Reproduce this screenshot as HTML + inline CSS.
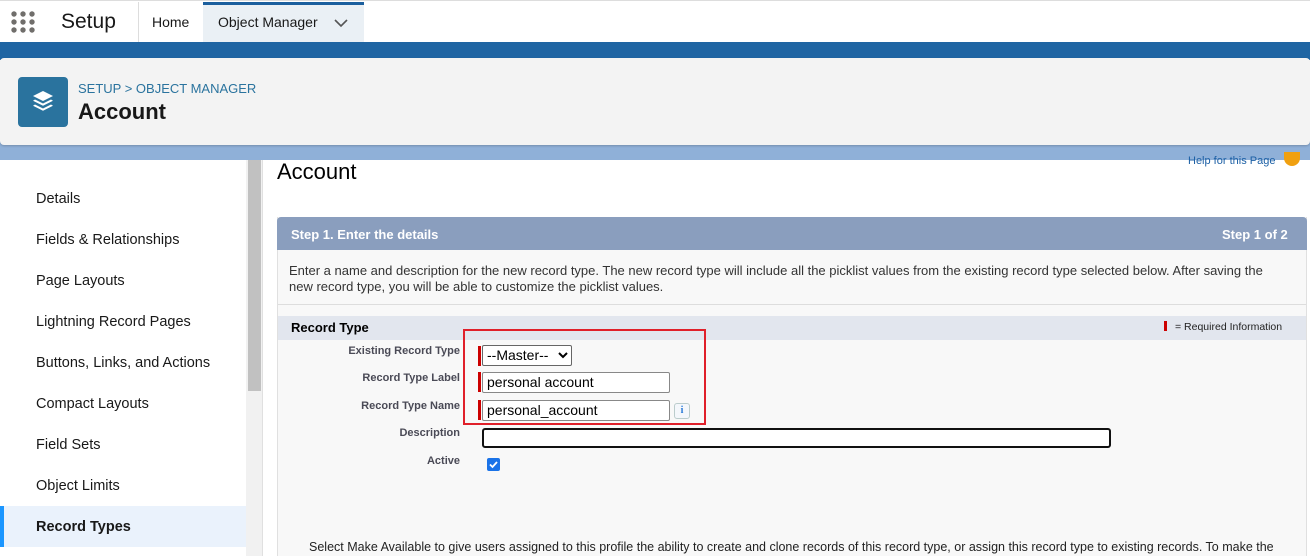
<!DOCTYPE html>
<html><head><style>
*{margin:0;padding:0;box-sizing:border-box}
body{width:1310px;height:556px;overflow:hidden;background:#fff;font-family:"Liberation Sans",Arial,sans-serif;position:relative}
.a{position:absolute}
.nav{font-size:14.5px;color:#181818;left:36px}
.lbl{font-size:11px;font-weight:bold;color:#4a4a56;text-align:right;width:190px;left:270px}
.inp{border:1px solid #888;background:#fff;font-size:14px;padding-left:4px;height:21px;line-height:19px;color:#000;border-radius:2px}
.req{width:3px;height:20px;background:#c00}
</style></head><body>
<div class="a" style="left:0;top:0;width:1310px;height:42px;background:#fff;border-top:1px solid #ddd"></div>
<svg class="a" style="left:11px;top:11px" width="26" height="22">
<g fill="#706e6b"><circle cx="3" cy="3" r="2.7"/><circle cx="12" cy="3" r="2.7"/><circle cx="21" cy="3" r="2.7"/><circle cx="3" cy="11" r="2.7"/><circle cx="12" cy="11" r="2.7"/><circle cx="21" cy="11" r="2.7"/><circle cx="3" cy="19" r="2.7"/><circle cx="12" cy="19" r="2.7"/><circle cx="21" cy="19" r="2.7"/></g></svg>
<div class="a" style="left:61px;top:10px;font-size:21px;color:#181818">Setup</div>
<div class="a" style="left:138px;top:2px;width:1px;height:40px;background:#ddd"></div>
<div class="a" style="left:152px;top:14px;font-size:14px;color:#181818">Home</div>
<div class="a" style="left:203px;top:2px;width:161px;height:40px;background:#eaf0f5;border-top:3px solid #1b5f9e"></div>
<div class="a" style="left:218px;top:14px;font-size:14px;color:#181818">Object Manager</div>
<svg class="a" style="left:334px;top:19px" width="14" height="9"><path d="M1 1l6 6 6-6" stroke="#555" stroke-width="1.6" fill="none"/></svg>
<div class="a" style="left:0;top:42px;width:1310px;height:18px;background:#1f65a3"></div>
<div class="a" style="left:0;top:138px;width:1310px;height:22px;background:#8fb0d8"></div>
<div class="a" style="left:0;top:58px;width:1310px;height:87px;background:#f3f3f3;border-radius:4px;box-shadow:0 1px 2px rgba(0,0,0,.2)"></div>
<div class="a" style="left:18px;top:77px;width:50px;height:50px;background:#2a739e;border-radius:4px"></div>
<svg class="a" style="left:31px;top:89px" width="24" height="24"><g fill="#fff"><path d="M12 2l10 5-10 5-10-5z"/><path d="M4 10.5l8 4 8-4 2 1.2-10 5-10-5z"/><path d="M4 15.5l8 4 8-4 2 1.2-10 5-10-5z"/></g></svg>
<div class="a" style="left:78px;top:81px;font-size:13px;color:#2a739e">SETUP &gt; OBJECT MANAGER</div>
<div class="a" style="left:78px;top:99px;font-size:22px;font-weight:bold;color:#181818">Account</div>
<div class="nav a" style="top:191px">Details</div>
<div class="nav a" style="top:232px">Fields &amp; Relationships</div>
<div class="nav a" style="top:273px">Page Layouts</div>
<div class="nav a" style="top:314px">Lightning Record Pages</div>
<div class="nav a" style="top:355px">Buttons, Links, and Actions</div>
<div class="nav a" style="top:396px">Compact Layouts</div>
<div class="nav a" style="top:437px">Field Sets</div>
<div class="nav a" style="top:478px">Object Limits</div>
<div class="a" style="left:0;top:506px;width:246px;height:41px;background:#eaf2fc;border-left:4px solid #1b96ff"></div>
<div class="nav a" style="top:519px;font-weight:bold">Record Types</div>
<div class="a" style="left:246px;top:160px;width:17px;height:396px;background:#f1f1f1;border-right:1px solid #e0e0e0"></div>
<div class="a" style="left:248px;top:160px;width:13px;height:231px;background:#c1c1c1"></div>
<div class="a" style="left:277px;top:159px;font-size:22px;color:#000">Account</div>
<div class="a" style="left:1188px;top:155px;font-size:11px;color:#1b5fa5">Help for this Page</div>
<div class="a" style="left:1284px;top:152px;width:16px;height:14px;background:#f0a010;border-radius:0 0 8px 8px"></div>
<div class="a" style="left:277px;top:217px;width:1030px;height:339px;background:#f8f8f8;border-left:1px solid #e0e0e0;border-right:1px solid #e0e0e0"></div>
<div class="a" style="left:277px;top:217px;width:1030px;height:33px;background:#8a9ebe;border-radius:4px 4px 0 0"></div>
<div class="a" style="left:291px;top:227px;font-size:13px;font-weight:bold;color:#fff">Step 1. Enter the details</div>
<div class="a" style="left:1222px;top:227px;font-size:13px;font-weight:bold;color:#fff">Step 1 of 2</div>
<div class="a" style="left:289px;top:263px;width:990px;font-size:13px;line-height:16px;color:#333">Enter a name and description for the new record type. The new record type will include all the picklist values from the existing record type selected below. After saving the new record type, you will be able to customize the picklist values.</div>
<div class="a" style="left:278px;top:304px;width:1028px;height:1px;background:#ddd"></div>
<div class="a" style="left:278px;top:316px;width:1028px;height:24px;background:#e2e6ee"></div>
<div class="a" style="left:291px;top:320px;font-size:13px;font-weight:bold;color:#000">Record Type</div>
<div class="a" style="left:1164px;top:321px;width:3px;height:10px;background:#c00"></div>
<div class="a" style="left:1175px;top:321px;font-size:10.5px;color:#222">= Required Information</div>
<div class="lbl a" style="top:345px">Existing Record Type</div>
<div class="lbl a" style="top:372px">Record Type Label</div>
<div class="lbl a" style="top:400px">Record Type Name</div>
<div class="lbl a" style="top:427px">Description</div>
<div class="lbl a" style="top:455px">Active</div>
<div class="req a" style="left:478px;top:346px"></div>
<div class="a inp" style="left:482px;top:345px;width:90px;border-color:#666">--Master--</div>
<svg class="a" style="left:558px;top:352px" width="10" height="7"><path d="M1 1l4 4 4-4" stroke="#000" stroke-width="2" fill="none"/></svg>
<div class="req a" style="left:478px;top:372px"></div>
<div class="a inp" style="left:482px;top:372px;width:188px">personal account</div>
<div class="req a" style="left:478px;top:400px"></div>
<div class="a inp" style="left:482px;top:400px;width:188px">personal_account</div>
<div class="a" style="left:674px;top:403px;width:16px;height:16px;border:1px solid #bcc;border-radius:3px;background:#f4f7fb;font-size:10px;font-weight:bold;color:#2a7ad8;text-align:center;line-height:14px;font-family:'Liberation Serif',serif">i</div>
<div class="a" style="left:482px;top:428px;width:629px;height:20px;border:2px solid #111;border-radius:3px;background:#fff"></div>
<div class="a" style="left:487px;top:458px;width:13px;height:13px;background:#1a73e8;border-radius:2px"></div>
<svg class="a" style="left:487px;top:458px" width="13" height="13"><path d="M3 6.5l2.5 2.5 4.5-5" stroke="#fff" stroke-width="1.8" fill="none"/></svg>
<div class="a" style="left:463px;top:329px;width:243px;height:96px;border:2px solid #e0202a"></div>
<div class="a" style="left:309px;top:540px;font-size:12.5px;color:#222;white-space:nowrap">Select Make Available to give users assigned to this profile the ability to create and clone records of this record type, or assign this record type to existing records. To make the</div>
</body></html>
